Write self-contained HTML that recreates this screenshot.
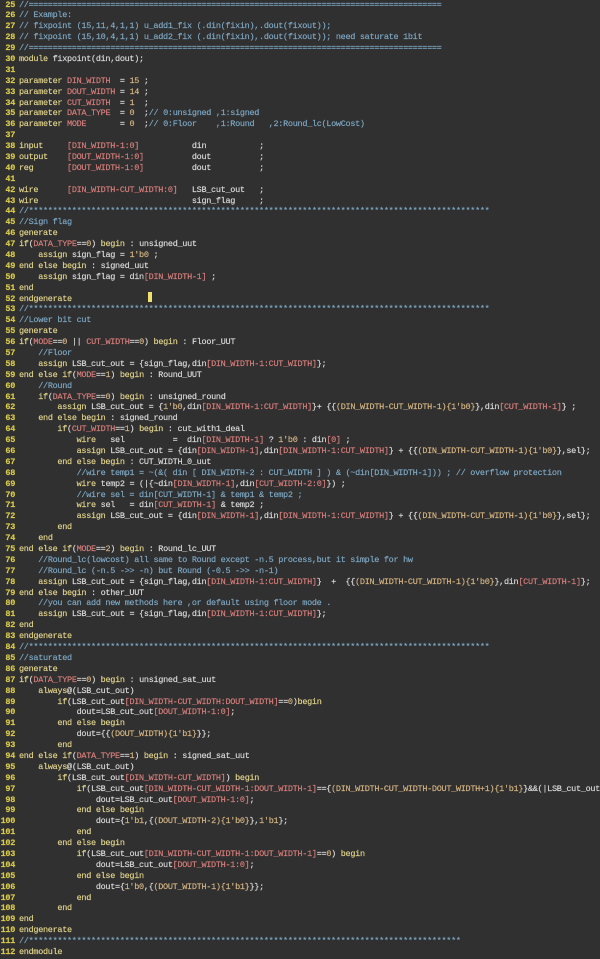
<!DOCTYPE html>
<html><head><meta charset="utf-8">
<style>
html,body{margin:0;padding:0;background:#303030;width:600px;height:959px;overflow:hidden}
#ed{position:absolute;left:0;top:-0.5px;width:600px;font-family:"Liberation Mono",monospace;font-size:8.5px;letter-spacing:-0.3px;color:#dcdcdc;-webkit-text-stroke:0.15px currentColor}
.l{height:10.9px;line-height:10.9px;white-space:pre;position:relative}
.l b{position:absolute;left:0;width:15px;text-align:right;color:#d9cb4a;font-weight:bold}
.l span.t{position:absolute;left:19px}
.k{color:#e3d58c}.m{color:#d97f7c}.n{color:#d8b784}.c{color:#7ea9c6}
#cur{position:absolute;left:148px;top:292px;width:4px;height:10px;background:#f0e070}
</style></head><body>
<div id="ed">
<div class="l"><b>25</b><span class="t"><span class="c">//======================================================================================</span></span></div>
<div class="l"><b>26</b><span class="t"><span class="c">// Example:</span></span></div>
<div class="l"><b>27</b><span class="t"><span class="c">// fixpoint (15,11,4,1,1) u_add1_fix (.din(fixin),.dout(fixout));</span></span></div>
<div class="l"><b>28</b><span class="t"><span class="c">// fixpoint (15,10,4,1,1) u_add2_fix (.din(fixin),.dout(fixout)); need saturate 1bit</span></span></div>
<div class="l"><b>29</b><span class="t"><span class="c">//======================================================================================</span></span></div>
<div class="l"><b>30</b><span class="t"><span class="k">module</span> fixpoint(din,dout);</span></div>
<div class="l"><b>31</b><span class="t"></span></div>
<div class="l"><b>32</b><span class="t"><span class="k">parameter</span> <span class="m">DIN_WIDTH</span>  = <span class="n">15</span> ;</span></div>
<div class="l"><b>33</b><span class="t"><span class="k">parameter</span> <span class="m">DOUT_WIDTH</span> = <span class="n">14</span> ;</span></div>
<div class="l"><b>34</b><span class="t"><span class="k">parameter</span> <span class="m">CUT_WIDTH</span>  = <span class="n">1</span>  ;</span></div>
<div class="l"><b>35</b><span class="t"><span class="k">parameter</span> <span class="m">DATA_TYPE</span>  = <span class="n">0</span>  ;<span class="c">// 0:unsigned ,1:signed</span></span></div>
<div class="l"><b>36</b><span class="t"><span class="k">parameter</span> <span class="m">MODE</span>       = <span class="n">0</span>  ;<span class="c">// 0:Floor    ,1:Round   ,2:Round_lc(LowCost)</span></span></div>
<div class="l"><b>37</b><span class="t"></span></div>
<div class="l"><b>38</b><span class="t"><span class="k">input</span>     <span class="m">[DIN_WIDTH-1:0]</span>           din           ;</span></div>
<div class="l"><b>39</b><span class="t"><span class="k">output</span>    <span class="m">[DOUT_WIDTH-1:0]</span>          dout          ;</span></div>
<div class="l"><b>40</b><span class="t"><span class="k">reg</span>       <span class="m">[DOUT_WIDTH-1:0]</span>          dout          ;</span></div>
<div class="l"><b>41</b><span class="t"></span></div>
<div class="l"><b>42</b><span class="t"><span class="k">wire</span>      <span class="m">[DIN_WIDTH-CUT_WIDTH:0]</span>   LSB_cut_out   ;</span></div>
<div class="l"><b>43</b><span class="t"><span class="k">wire</span>                                sign_flag     ;</span></div>
<div class="l"><b>44</b><span class="t"><span class="c">//************************************************************************************************</span></span></div>
<div class="l"><b>45</b><span class="t"><span class="c">//Sign flag</span></span></div>
<div class="l"><b>46</b><span class="t"><span class="k">generate</span></span></div>
<div class="l"><b>47</b><span class="t"><span class="k">if</span>(<span class="m">DATA_TYPE</span>==<span class="n">0</span>) <span class="k">begin</span> : unsigned_uut</span></div>
<div class="l"><b>48</b><span class="t">    <span class="k">assign</span> sign_flag = <span class="n">1'b0</span> ;</span></div>
<div class="l"><b>49</b><span class="t"><span class="k">end else begin</span> : signed_uut</span></div>
<div class="l"><b>50</b><span class="t">    <span class="k">assign</span> sign_flag = din<span class="m">[DIN_WIDTH-1]</span> ;</span></div>
<div class="l"><b>51</b><span class="t"><span class="k">end</span></span></div>
<div class="l"><b>52</b><span class="t"><span class="k">endgenerate</span></span></div>
<div class="l"><b>53</b><span class="t"><span class="c">//************************************************************************************************</span></span></div>
<div class="l"><b>54</b><span class="t"><span class="c">//Lower bit cut</span></span></div>
<div class="l"><b>55</b><span class="t"><span class="k">generate</span></span></div>
<div class="l"><b>56</b><span class="t"><span class="k">if</span>(<span class="m">MODE</span>==<span class="n">0</span> || <span class="m">CUT_WIDTH</span>==<span class="n">0</span>) <span class="k">begin</span> : Floor_UUT</span></div>
<div class="l"><b>57</b><span class="t">    <span class="c">//Floor</span></span></div>
<div class="l"><b>58</b><span class="t">    <span class="k">assign</span> LSB_cut_out = {sign_flag,din<span class="m">[DIN_WIDTH-1:CUT_WIDTH]</span>};</span></div>
<div class="l"><b>59</b><span class="t"><span class="k">end else if</span>(<span class="m">MODE</span>==<span class="n">1</span>) <span class="k">begin</span> : Round_UUT</span></div>
<div class="l"><b>60</b><span class="t">    <span class="c">//Round</span></span></div>
<div class="l"><b>61</b><span class="t">    <span class="k">if</span>(<span class="m">DATA_TYPE</span>==<span class="n">0</span>) <span class="k">begin</span> : unsigned_round</span></div>
<div class="l"><b>62</b><span class="t">        <span class="k">assign</span> LSB_cut_out = {<span class="n">1'b0</span>,din<span class="m">[DIN_WIDTH-1:CUT_WIDTH]</span>}+ {{<span class="n">(DIN_WIDTH-CUT_WIDTH-1){1'b0}</span>},din<span class="m">[CUT_WIDTH-1]</span>} ;</span></div>
<div class="l"><b>63</b><span class="t">    <span class="k">end else begin</span> : signed_round</span></div>
<div class="l"><b>64</b><span class="t">        <span class="k">if</span>(<span class="m">CUT_WIDTH</span>==<span class="n">1</span>) <span class="k">begin</span> : cut_with1_deal</span></div>
<div class="l"><b>65</b><span class="t">            <span class="k">wire</span>   sel          =  din<span class="m">[DIN_WIDTH-1]</span> ? <span class="n">1'b0</span> : din<span class="m">[0]</span> ;</span></div>
<div class="l"><b>66</b><span class="t">            <span class="k">assign</span> LSB_cut_out = {din<span class="m">[DIN_WIDTH-1]</span>,din<span class="m">[DIN_WIDTH-1:CUT_WIDTH]</span>} + {{<span class="n">(DIN_WIDTH-CUT_WIDTH-1){1'b0}</span>},sel};</span></div>
<div class="l"><b>67</b><span class="t">        <span class="k">end else begin</span> : CUT_WIDTH_0_uut</span></div>
<div class="l"><b>68</b><span class="t">            <span class="c">//wire temp1 = ~(&( din [ DIN_WIDTH-2 : CUT_WIDTH ] ) &amp; (~din[DIN_WIDTH-1])) ; // overflow protection</span></span></div>
<div class="l"><b>69</b><span class="t">            <span class="k">wire</span> temp2 = (|{~din<span class="m">[DIN_WIDTH-1]</span>,din<span class="m">[CUT_WIDTH-2:0]</span>}) ;</span></div>
<div class="l"><b>70</b><span class="t">            <span class="c">//wire sel = din[CUT_WIDTH-1] &amp; temp1 &amp; temp2 ;</span></span></div>
<div class="l"><b>71</b><span class="t">            <span class="k">wire</span> sel   = din<span class="m">[CUT_WIDTH-1]</span> &amp; temp2 ;</span></div>
<div class="l"><b>72</b><span class="t">            <span class="k">assign</span> LSB_cut_out = {din<span class="m">[DIN_WIDTH-1]</span>,din<span class="m">[DIN_WIDTH-1:CUT_WIDTH]</span>} + {{<span class="n">(DIN_WIDTH-CUT_WIDTH-1){1'b0}</span>},sel};</span></div>
<div class="l"><b>73</b><span class="t">        <span class="k">end</span></span></div>
<div class="l"><b>74</b><span class="t">    <span class="k">end</span></span></div>
<div class="l"><b>75</b><span class="t"><span class="k">end else if</span>(<span class="m">MODE</span>==<span class="n">2</span>) <span class="k">begin</span> : Round_lc_UUT</span></div>
<div class="l"><b>76</b><span class="t">    <span class="c">//Round_lc(lowcost) all same to Round except -n.5 process,but it simple for hw</span></span></div>
<div class="l"><b>77</b><span class="t">    <span class="c">//Round_lc (-n.5 ->> -n) but Round (-0.5 ->> -n-1)</span></span></div>
<div class="l"><b>78</b><span class="t">    <span class="k">assign</span> LSB_cut_out = {sign_flag,din<span class="m">[DIN_WIDTH-1:CUT_WIDTH]</span>}  +  {{<span class="n">(DIN_WIDTH-CUT_WIDTH-1){1'b0}</span>},din<span class="m">[CUT_WIDTH-1]</span>};</span></div>
<div class="l"><b>79</b><span class="t"><span class="k">end else begin</span> : other_UUT</span></div>
<div class="l"><b>80</b><span class="t">    <span class="c">//you can add new methods here ,or default using floor mode .</span></span></div>
<div class="l"><b>81</b><span class="t">    <span class="k">assign</span> LSB_cut_out = {sign_flag,din<span class="m">[DIN_WIDTH-1:CUT_WIDTH]</span>};</span></div>
<div class="l"><b>82</b><span class="t"><span class="k">end</span></span></div>
<div class="l"><b>83</b><span class="t"><span class="k">endgenerate</span></span></div>
<div class="l"><b>84</b><span class="t"><span class="c">//************************************************************************************************</span></span></div>
<div class="l"><b>85</b><span class="t"><span class="c">//saturated</span></span></div>
<div class="l"><b>86</b><span class="t"><span class="k">generate</span></span></div>
<div class="l"><b>87</b><span class="t"><span class="k">if</span>(<span class="m">DATA_TYPE</span>==<span class="n">0</span>) <span class="k">begin</span> : unsigned_sat_uut</span></div>
<div class="l"><b>88</b><span class="t">    <span class="k">always</span>@(LSB_cut_out)</span></div>
<div class="l"><b>89</b><span class="t">        <span class="k">if</span>(LSB_cut_out<span class="m">[DIN_WIDTH-CUT_WIDTH:DOUT_WIDTH]</span>==<span class="n">0</span>)<span class="k">begin</span></span></div>
<div class="l"><b>90</b><span class="t">            dout=LSB_cut_out<span class="m">[DOUT_WIDTH-1:0]</span>;</span></div>
<div class="l"><b>91</b><span class="t">        <span class="k">end else begin</span></span></div>
<div class="l"><b>92</b><span class="t">            dout={{<span class="n">(DOUT_WIDTH){1'b1}</span>}};</span></div>
<div class="l"><b>93</b><span class="t">        <span class="k">end</span></span></div>
<div class="l"><b>94</b><span class="t"><span class="k">end else if</span>(<span class="m">DATA_TYPE</span>==<span class="n">1</span>) <span class="k">begin</span> : signed_sat_uut</span></div>
<div class="l"><b>95</b><span class="t">    <span class="k">always</span>@(LSB_cut_out)</span></div>
<div class="l"><b>96</b><span class="t">        <span class="k">if</span>(LSB_cut_out<span class="m">[DIN_WIDTH-CUT_WIDTH]</span>) <span class="k">begin</span></span></div>
<div class="l"><b>97</b><span class="t">            <span class="k">if</span>(LSB_cut_out<span class="m">[DIN_WIDTH-CUT_WIDTH-1:DOUT_WIDTH-1]</span>=={<span class="n">(DIN_WIDTH-CUT_WIDTH-DOUT_WIDTH+1){1'b1}</span>}&amp;&amp;(|LSB_cut_out[</span></div>
<div class="l"><b>98</b><span class="t">                dout=LSB_cut_out<span class="m">[DOUT_WIDTH-1:0]</span>;</span></div>
<div class="l"><b>99</b><span class="t">            <span class="k">end else begin</span></span></div>
<div class="l"><b>100</b><span class="t">                dout={<span class="n">1'b1</span>,{<span class="n">(DOUT_WIDTH-2){1'b0}</span>},<span class="n">1'b1</span>};</span></div>
<div class="l"><b>101</b><span class="t">            <span class="k">end</span></span></div>
<div class="l"><b>102</b><span class="t">        <span class="k">end else begin</span></span></div>
<div class="l"><b>103</b><span class="t">            <span class="k">if</span>(LSB_cut_out<span class="m">[DIN_WIDTH-CUT_WIDTH-1:DOUT_WIDTH-1]</span>==<span class="n">0</span>) <span class="k">begin</span></span></div>
<div class="l"><b>104</b><span class="t">                dout=LSB_cut_out<span class="m">[DOUT_WIDTH-1:0]</span>;</span></div>
<div class="l"><b>105</b><span class="t">            <span class="k">end else begin</span></span></div>
<div class="l"><b>106</b><span class="t">                dout={<span class="n">1'b0</span>,{<span class="n">(DOUT_WIDTH-1){1'b1}</span>}};</span></div>
<div class="l"><b>107</b><span class="t">            <span class="k">end</span></span></div>
<div class="l"><b>108</b><span class="t">        <span class="k">end</span></span></div>
<div class="l"><b>109</b><span class="t"><span class="k">end</span></span></div>
<div class="l"><b>110</b><span class="t"><span class="k">endgenerate</span></span></div>
<div class="l"><b>111</b><span class="t"><span class="c">//******************************************************************************************</span></span></div>
<div class="l"><b>112</b><span class="t"><span class="k">endmodule</span></span></div>
</div>
<div id="cur"></div>
</body></html>
